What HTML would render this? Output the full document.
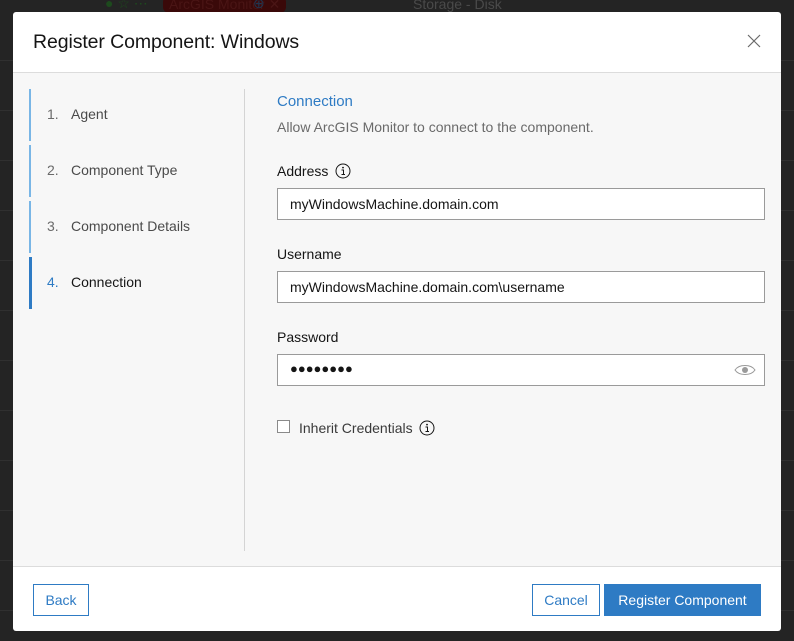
<!DOCTYPE html>
<html><head><meta charset="utf-8"><style>
*{box-sizing:border-box;margin:0;padding:0}
body{width:794px;height:641px;background:#242424;font-family:"Liberation Sans",sans-serif;position:relative;overflow:hidden;color:#151515}
.bgtxt{position:absolute;color:#4a4a4a;font-size:14px}
.row{position:absolute;left:0;width:794px;height:1px;background:#303030}
.modal{position:absolute;left:13px;top:12px;width:768px;height:619px;background:#fff;border-radius:3px;overflow:hidden}
.hdr{height:61px;border-bottom:1px solid #dcdcdc;position:relative}
.hdr h1{font-weight:normal;font-size:19.5px;position:absolute;left:20px;top:19px;color:#151515;letter-spacing:-0.1px}
.close{position:absolute;right:20px;top:22px}
.body{position:absolute;top:61px;left:0;width:768px;height:494px;background:#f7f7f7;border-bottom:1px solid #dcdcdc}
.step{position:absolute;left:16px;width:200px;height:52px;border-left:2px solid #79b6e6;font-size:14px;color:#4a4a4a;padding:17px 0 0 16px}
.step b{font-weight:normal;display:inline-block;width:24px;color:#6a6a6a}
.step.act{border-left:3px solid #2e7bc4;padding-left:15px;color:#151515}
.step.act b{color:#2e7bc4}
.div{position:absolute;left:231px;top:16px;width:1px;height:462px;background:#d4d4d4}
.lbl{position:absolute;left:264px;font-size:14px;color:#151515}
.inp{position:absolute;left:264px;width:488px;height:32px;background:#fff;border:1px solid #9a9a9a;font-size:14px;padding:7px 12px;color:#151515}
.btn{position:absolute;top:572px;height:32px;font-size:14px;text-align:center;line-height:30px}
</style></head><body>
<div class="bgtxt" style="left:105px;top:-5px;color:#1d4a1d">● ☆ ⋯</div>
<div class="bgtxt" style="left:163px;top:-4px;color:#4a1515;background:#3a0909;padding:0 6px;border-radius:6px">ArcGIS Monitor ✕</div>
<div class="bgtxt" style="left:253px;top:-5px;color:#1f3550">⊕</div>
<div class="bgtxt" style="left:413px;top:-4px">Storage - Disk</div>
<div class="row" style="top:60px"></div><div class="row" style="top:110px"></div><div class="row" style="top:160px"></div><div class="row" style="top:210px"></div><div class="row" style="top:260px"></div><div class="row" style="top:310px"></div><div class="row" style="top:360px"></div><div class="row" style="top:410px"></div><div class="row" style="top:460px"></div><div class="row" style="top:510px"></div><div class="row" style="top:560px"></div><div class="row" style="top:610px"></div>
<div class="modal">
<div class="hdr"><h1>Register Component: Windows</h1>
<svg class="close" width="14" height="14" viewBox="0 0 14 14"><path d="M1 1L13 13M13 1L1 13" stroke="#6a6a6a" stroke-width="1.2"/></svg></div>
<div class="body">
<div class="step" style="top:16px"><b>1.</b>Agent</div>
<div class="step" style="top:72px"><b>2.</b>Component Type</div>
<div class="step" style="top:128px"><b>3.</b>Component Details</div>
<div class="step act" style="top:184px"><b>4.</b>Connection</div>
<div class="div"></div>
</div>
<div style="position:absolute;left:264px;top:81px;font-size:15px;color:#2e7bc4">Connection</div>
<div style="position:absolute;left:264px;top:107px;font-size:14px;color:#6a6a6a">Allow ArcGIS Monitor to connect to the component.</div>
<div class="lbl" style="top:151px">Address <svg style="vertical-align:-3px;margin-left:3px" width="16" height="16" viewBox="0 0 16 16"><circle cx="8" cy="8" r="7" fill="none" stroke="#151515" stroke-width="1"/><circle cx="8" cy="4.6" r="0.9" fill="#151515"/><path d="M6.5 7h2v4.5M6.5 11.5h3.5" stroke="#151515" stroke-width="1" fill="none"/></svg></div>
<div class="inp" style="top:176px">myWindowsMachine.domain.com</div>
<div class="lbl" style="top:234px">Username</div>
<div class="inp" style="top:259px">myWindowsMachine.domain.com\username</div>
<div class="lbl" style="top:317px">Password</div>
<div class="inp" style="top:342px;font-size:13px;letter-spacing:0px;padding-top:6px">●●●●●●●●
<svg style="position:absolute;right:8px;top:8px" width="22" height="14" viewBox="0 0 22 14"><path d="M1 7C5 1 17 1 21 7C17 13 5 13 1 7Z" fill="none" stroke="#9a9a9a" stroke-width="1"/><circle cx="11" cy="7" r="3" fill="#9a9a9a"/></svg></div>
<div style="position:absolute;left:264px;top:408px;width:13px;height:13px;border:1px solid #8a8a8a;background:#fff"></div>
<div class="lbl" style="left:286px;top:408px;color:#3a3a3a">Inherit Credentials <svg style="vertical-align:-3px;margin-left:2px" width="16" height="16" viewBox="0 0 16 16"><circle cx="8" cy="8" r="7" fill="none" stroke="#151515" stroke-width="1"/><circle cx="8" cy="4.6" r="0.9" fill="#151515"/><path d="M6.5 7h2v4.5M6.5 11.5h3.5" stroke="#151515" stroke-width="1" fill="none"/></svg></div>
<div class="btn" style="left:20px;width:56px;border:1px solid #2e7bc4;color:#2e7bc4">Back</div>
<div class="btn" style="left:519px;width:68px;border:1px solid #2e7bc4;color:#2e7bc4">Cancel</div>
<div class="btn" style="left:591px;width:157px;background:#2e7bc4;color:#fff;line-height:32px">Register Component</div>
</div>
</body></html>
